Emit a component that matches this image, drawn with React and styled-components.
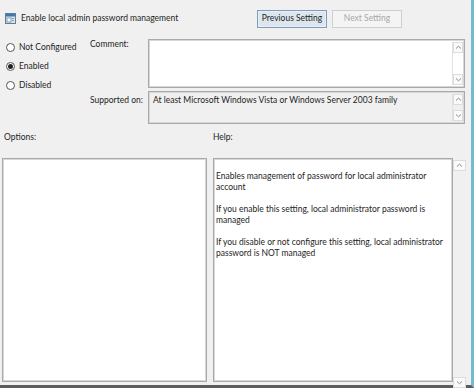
import React from 'react';
import styled, { createGlobalStyle } from 'styled-components';

const GlobalStyle = createGlobalStyle`
  html, body {
    margin: 0;
    padding: 0;
    background: #f0f0f0;
  }
  * {
    box-sizing: border-box;
  }
`;

const Window = styled.div`
  width: 474px;
  height: 388px;
  background: #f0f0f0;
  border-right: 3px solid #74bccb;
  border-bottom: 3px solid #5c5c5c;
  font-family: Lato, 'Noto Sans', sans-serif;
  font-size: 8.5px;
  line-height: 11px;
  color: #1e1e1e;
  display: flex;
  flex-direction: column;
`;

const Header = styled.div`
  display: flex;
  align-items: center;
  height: 37px;
  padding: 0 0 0 5px;
`;

const PolicyIcon = styled.svg`
  width: 11px;
  height: 11px;
  flex: none;
`;

const Title = styled.div`
  margin-left: 5px;
  width: 236px;
`;

const ButtonBar = styled.div`
  display: flex;
  gap: 5px;
`;

const Button = styled.div`
  height: 18px;
  display: flex;
  align-items: center;
  justify-content: center;
  width: ${(p) => p.$width}px;
  border: 1px solid ${(p) => (p.$disabled ? '#cfcfcf' : '#7f9db9')};
  background: ${(p) => (p.$disabled ? '#f4f4f4' : '#dde6ef')};
  color: ${(p) => (p.$disabled ? '#a8a8a8' : '#1e1e1e')};
  box-shadow: ${(p) => (p.$disabled ? 'none' : 'inset 0 0 0 1px #e9eef4')};
`;

const Top = styled.div`
  display: grid;
  grid-template-columns: 88px 58px 317px;
  grid-template-rows: 49px 33px;
  row-gap: 3px;
  padding-left: 2px;
  margin-top: 2px;
`;

const RadioGroup = styled.div`
  grid-row: 1 / span 2;
  display: flex;
  flex-direction: column;
  gap: 7px;
  padding: 2px 0 0 4px;
`;

const RadioRow = styled.label`
  display: flex;
  align-items: center;
  height: 12px;
  gap: 4px;
`;

const RadioDot = styled.span`
  width: 9px;
  height: 9px;
  border-radius: 50%;
  border: 1px solid #555;
  background: #fff;
  display: flex;
  align-items: center;
  justify-content: center;
  &::after {
    content: '';
    width: 5px;
    height: 5px;
    border-radius: 50%;
    background: ${(p) => (p.$checked ? '#222' : 'transparent')};
  }
`;

const FieldLabel = styled.div`
  padding-top: ${(p) => p.$top}px;
`;

const Field = styled.div`
  border: 1px solid #a9a9a9;
  box-shadow: inset 0 0 0 1px #d8d8d8;
  background: ${(p) => (p.$readOnly ? '#f0f0f0' : '#fff')};
  display: flex;
`;

const FieldText = styled.div`
  flex: 1;
  padding: 3px 4px;
  white-space: nowrap;
`;

const ScrollBar = styled.div`
  width: 11px;
  flex: none;
  margin: 2px 1px 2px 0;
  display: flex;
  flex-direction: column;
  justify-content: space-between;
  border-left: 1px solid #e2e2e2;
`;

const Arrow = styled.div`
  height: 11px;
  display: flex;
  align-items: center;
  justify-content: center;
  border: 1px solid #dcdcdc;
  background: #fafafa;
`;

const SectionLabels = styled.div`
  display: flex;
  height: 34px;
  padding-top: 8px;
`;

const SectionLabel = styled.div`
  width: ${(p) => p.$width}px;
  padding-left: 4px;
`;

const Bottom = styled.div`
  display: flex;
  gap: 6px;
  padding-left: 2px;
  height: 224px;
`;

const Pane = styled.div`
  width: ${(p) => p.$width}px;
  border: 1px solid #a9a9a9;
  box-shadow: inset 0 0 0 1px #d8d8d8;
  background: #fff;
`;

const HelpWrap = styled.div`
  display: flex;
`;

const HelpText = styled.div`
  padding: 12px 1px 0 2px;
  p {
    margin: 0 0 11px;
  }
`;

const SideScroll = styled.div`
  width: 13px;
  display: flex;
  flex-direction: column;
  justify-content: space-between;
  padding: 2px 0 0 0;
  margin-bottom: -6px;
`;

const Chevron = ({ down }) => (
  <svg width="7" height="5" viewBox="0 0 7 5">
    <path
      d={down ? 'M1 1.5 L3.5 3.8 L6 1.5' : 'M1 3.5 L3.5 1.2 L6 3.5'}
      fill="none"
      stroke="#8a8a8a"
      strokeWidth="1"
    />
  </svg>
);

const Scroll = () => (
  <ScrollBar>
    <Arrow>
      <Chevron />
    </Arrow>
    <Arrow>
      <Chevron down />
    </Arrow>
  </ScrollBar>
);

const radios = [
  { label: 'Not Configured', checked: false },
  { label: 'Enabled', checked: true },
  { label: 'Disabled', checked: false },
];

const App = () => {
  return (
    <>
      <GlobalStyle />
      <Window>
        <Header>
          <PolicyIcon viewBox="0 0 11 11">
            <rect x="0.5" y="0.5" width="10" height="10" fill="#d9e4ee" stroke="#5f7f99" />
            <rect x="1" y="1" width="9" height="2.5" fill="#3d78b0" />
            <rect x="2" y="5" width="4" height="4" fill="#ffffff" stroke="#6d8aa3" strokeWidth="0.8" />
            <path d="M7 5.5 L9 5.5 M7 7.5 L9 7.5" stroke="#6d8aa3" strokeWidth="0.8" />
          </PolicyIcon>
          <Title>Enable local admin password management</Title>
          <ButtonBar>
            <Button $width={70}>Previous Setting</Button>
            <Button $width={70} $disabled>
              Next Setting
            </Button>
          </ButtonBar>
        </Header>
        <Top>
          <RadioGroup>
            {radios.map((r) => (
              <RadioRow key={r.label}>
                <RadioDot $checked={r.checked} />
                {r.label}
              </RadioRow>
            ))}
          </RadioGroup>
          <FieldLabel $top={0}>Comment:</FieldLabel>
          <Field>
            <FieldText />
            <Scroll />
          </Field>
          <FieldLabel $top={4}>Supported on:</FieldLabel>
          <Field $readOnly>
            <FieldText>At least Microsoft Windows Vista or Windows Server 2003 family</FieldText>
            <Scroll />
          </Field>
        </Top>
        <SectionLabels>
          <SectionLabel $width={209}>Options:</SectionLabel>
          <SectionLabel>Help:</SectionLabel>
        </SectionLabels>
        <Bottom>
          <Pane $width={205} />
          <HelpWrap>
            <Pane $width={240}>
              <HelpText>
                <p>Enables management of password for local administrator account</p>
                <p>If you enable this setting, local administrator password is managed</p>
                <p>If you disable or not configure this setting, local administrator password is NOT managed</p>
              </HelpText>
            </Pane>
            <SideScroll>
              <Arrow>
                <Chevron />
              </Arrow>
              <Arrow>
                <Chevron down />
              </Arrow>
            </SideScroll>
          </HelpWrap>
        </Bottom>
      </Window>
    </>
  );
};

export default App;
